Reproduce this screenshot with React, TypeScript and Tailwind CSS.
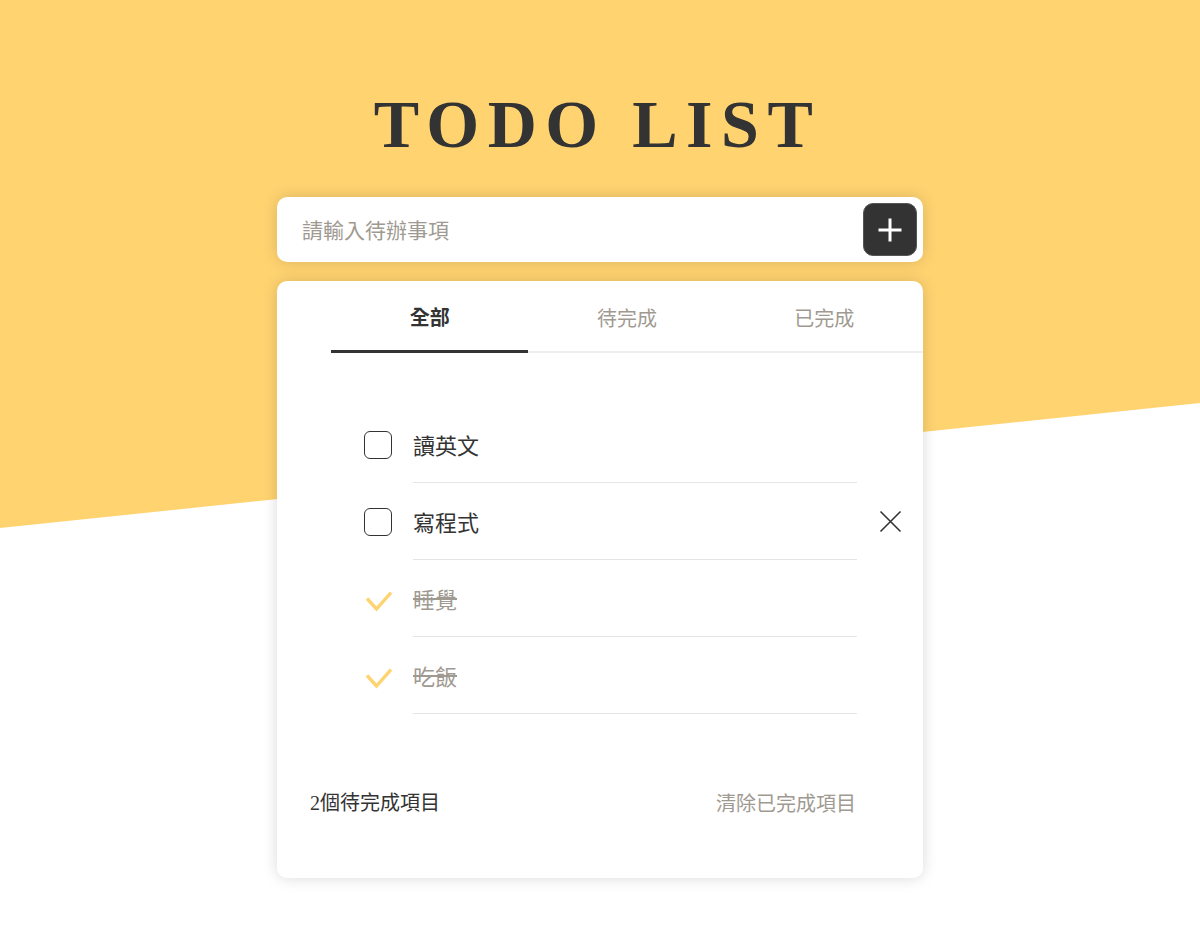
import { useState } from 'react'

type Todo = { id: number; text: string; done: boolean }

const initial: Todo[] = [
  { id: 1, text: '讀英文', done: false },
  { id: 2, text: '寫程式', done: false },
  { id: 3, text: '睡覺', done: true },
  { id: 4, text: '吃飯', done: true },
]

const tabs = ['全部', '待完成', '已完成']

const serif = '[font-family:"Liberation_Serif","Noto_Sans_CJK_TC",serif]'
const sans = '[font-family:"Noto_Sans_CJK_TC","Noto_Sans",sans-serif]'

export default function App() {
  const [todos, setTodos] = useState<Todo[]>(initial)
  const [tab, setTab] = useState(0)
  const [hover, setHover] = useState<number | null>(2)

  const toggle = (id: number) =>
    setTodos((list) => list.map((t) => (t.id === id ? { ...t, done: !t.done } : t)))

  const left = todos.filter((t) => !t.done).length

  return (
    <main className="relative min-h-screen overflow-hidden bg-white">
      {/* yellow slanted backdrop */}
      <div className="absolute inset-x-0 top-0 h-[528px] bg-[#FFD370] [clip-path:polygon(0_0,100%_0,100%_403px,0_528px)]" />

      <div className="relative flex flex-col items-center pb-16">
        <h1
          className={`mt-[90px] h-[68px] pr-[5px] text-[68px] font-bold leading-none tracking-[8.5px] text-[#333333] ${serif}`}
        >
          TODO LIST
        </h1>

        <div className="mt-[39px] flex h-[65px] w-[646px] items-center rounded-[10px] bg-white pl-[25px] pr-[6px] shadow-[0_0_15px_rgba(0,0,0,0.15)]">
          <input
            className={`flex-1 bg-transparent text-[21px] text-[#333] outline-none placeholder:text-[#9F9A91] ${sans}`}
            placeholder="請輸入待辦事項"
          />
          <button className="flex h-[53px] w-[54px] items-center justify-center rounded-[10px] border border-[#555] bg-[#333333]">
            <svg width="24" height="24" viewBox="0 0 24 24" fill="none" stroke="white" strokeWidth="3" strokeLinecap="square">
              <path d="M12 2v20M2 12h20" />
            </svg>
          </button>
        </div>

        <section className="mt-[19px] w-[646px] overflow-hidden rounded-[10px] bg-white pb-[63px] shadow-[0_0_15px_rgba(0,0,0,0.15)]">
          <div className="flex pl-[54px]">
            {tabs.map((t, i) => (
              <button
                key={t}
                onClick={() => setTab(i)}
                className={`flex h-[72px] flex-1 items-center justify-center pt-[4px] text-[20px] ${
                  i === tab
                    ? `border-b-[3px] border-[#333333] font-bold text-[#333333] ${serif}`
                    : `border-b-2 border-[#EFEFEF] text-[#9F9A91] ${sans}`
                }`}
              >
                {t}
              </button>
            ))}
          </div>

          <ul className="mt-[53px] pl-[87px] pr-[21px]">
            {todos
              .filter((t) => (tab === 0 ? true : tab === 1 ? !t.done : t.done))
              .map((t) => (
                <li
                  key={t.id}
                  className="flex items-center"
                  onMouseEnter={() => setHover(t.id)}
                  onMouseLeave={() => setHover(null)}
                >
                  <button onClick={() => toggle(t.id)} className="flex h-[28px] w-[28px] shrink-0 items-center justify-center">
                    {t.done ? (
                      <svg width="28" height="28" viewBox="0 0 28 28" fill="none" stroke="#FFD370" strokeWidth="3.4">
                        <path d="M3 13.5l9.5 10.5L27 7.5" />
                      </svg>
                    ) : (
                      <span className="block h-[28px] w-[28px] rounded-[6px] border border-[#333333]" />
                    )}
                  </button>
                  <div
                    className={`ml-[21px] flex h-[77px] flex-1 items-center border-b border-[#E5E5E5] text-[22px] ${sans} ${
                      t.done ? 'text-[#9F9A91] line-through' : 'text-[#333333]'
                    }`}
                  >
                    {t.text}
                  </div>
                  <button
                    onClick={() => setTodos((list) => list.filter((x) => x.id !== t.id))}
                    className={`ml-[22px] flex h-[23px] w-[23px] items-center justify-center ${hover === t.id ? 'visible' : 'invisible'}`}
                  >
                    <svg width="23" height="23" viewBox="0 0 23 23" fill="none" stroke="#333333" strokeWidth="1.6">
                      <path d="M1.5 1.5l20 20M21.5 1.5l-20 20" />
                    </svg>
                  </button>
                </li>
              ))}
          </ul>

          <div className="mt-[77px] flex h-[24px] items-center justify-between pl-[33px] pr-[67px] text-[20px]">
            <p className={`text-[#333333] ${serif}`}>{left}個待完成項目</p>
            <button
              onClick={() => setTodos((list) => list.filter((t) => !t.done))}
              className={`text-[#9F9A91] ${sans}`}
            >
              清除已完成項目
            </button>
          </div>
        </section>
      </div>
    </main>
  )
}
